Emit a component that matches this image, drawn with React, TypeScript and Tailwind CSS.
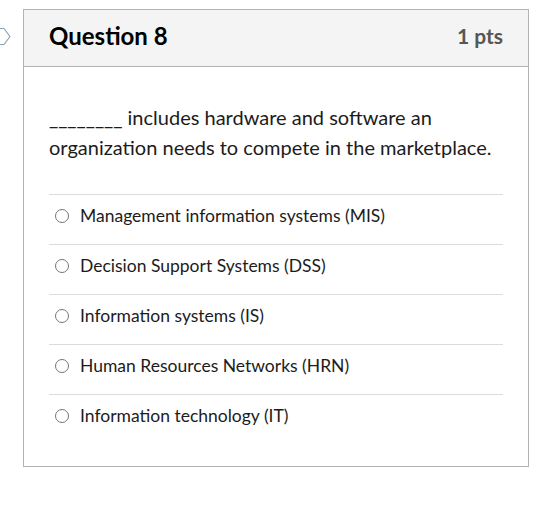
const answers = [
  "Management information systems (MIS)",
  "Decision Support Systems (DSS)",
  "Information systems (IS)",
  "Human Resources Networks (HRN)",
  "Information technology (IT)",
];

function FlagMarker() {
  return (
    <svg width="23" height="20" viewBox="0 0 23 20" className="mt-[18px] shrink-0">
      <path
        d="M-4 1.5 H4 L10 9.5 L4 17.5 H-4"
        fill="none"
        stroke="#8da2b0"
        strokeWidth="1.2"
        strokeLinejoin="round"
      />
    </svg>
  );
}

export default function App() {
  return (
    <div className="flex bg-white pt-[9px] font-['Lato','Liberation_Sans',sans-serif] text-[#1c1c1c]">
      <FlagMarker />
      <div className="w-[506px] border border-[#b3b3b3] bg-white">
        <div className="flex h-[57px] items-center justify-between border-b border-[#b3b3b3] bg-[#f4f4f4] pb-[4px] pl-[25px] pr-[25px]">
          <h2 className="text-[24px] font-bold text-black">Question 8</h2>
          <span className="text-[21px] font-bold text-[#565656]">1 pts</span>
        </div>
        <div className="px-[25px] pt-[35px] pb-[22px]">
          <p className="text-[20px] leading-[30px]">
            ________ includes hardware and software an organization needs to
            compete in the marketplace.
          </p>
          <div className="mt-[32px]">
            {answers.map((a) => (
              <label
                key={a}
                className="flex items-center border-t border-[#dcdcdc] pt-2 pb-[15px] text-[17.5px] leading-[26px]"
              >
                <span className="ml-[6px] mr-[11px] h-[14px] w-[14px] shrink-0 rounded-full border border-[#767676] bg-white" />
                {a}
              </label>
            ))}
          </div>
        </div>
      </div>
    </div>
  );
}
